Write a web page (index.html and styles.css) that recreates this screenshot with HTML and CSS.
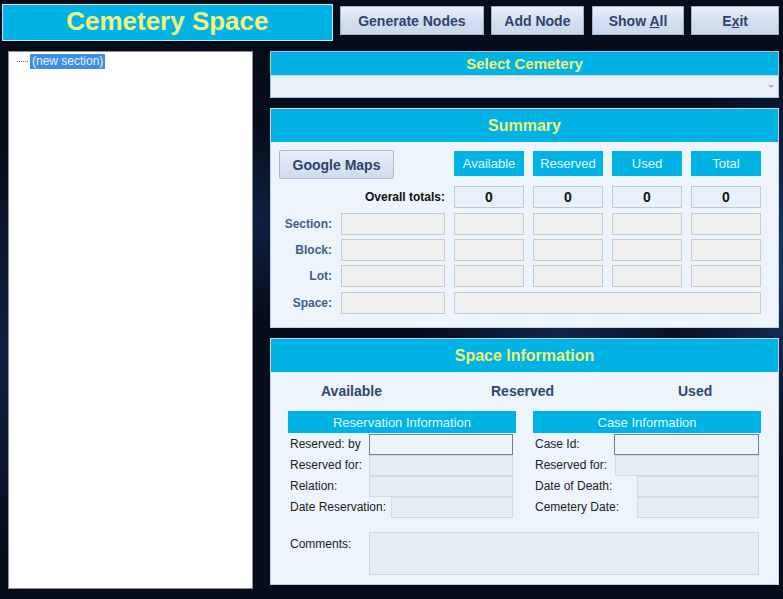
FILE: index.html
```html
<!DOCTYPE html>
<html>
<head>
<meta charset="utf-8">
<link rel="stylesheet" href="styles.css">
</head>
<body>
<div class="app">
  <div class="topbar">
    <div class="title">Cemetery Space</div>
    <div class="btn w-gen">Generate Nodes</div>
    <div class="btn w-add">Add Node</div>
    <div class="btn w-show"><span>Show <u>A</u>ll</span></div>
    <div class="btn w-exit"><span>E<u>x</u>it</span></div>
  </div>
  <div class="main">
    <div class="tree">
      <div class="node"><span class="dots"></span><span class="sel">(new section)</span></div>
    </div>
    <div class="right">
      <div class="panel select">
        <div class="phead small">Select Cemetery</div>
        <div class="dropdown"><span class="arrow"></span></div>
      </div>
      <div class="panel summary">
        <div class="phead">Summary</div>
        <div class="sbody">
          <div class="gmaps">Google Maps</div>
          <div class="pill">Available</div>
          <div class="pill">Reserved</div>
          <div class="pill">Used</div>
          <div class="pill">Total</div>

          <div class="lbl span2 dark tl">Overall totals:</div>
          <div class="tot">0</div>
          <div class="tot">0</div>
          <div class="tot">0</div>
          <div class="tot">0</div>

          <div class="lbl">Section:</div>
          <div class="box"></div><div class="box"></div><div class="box"></div><div class="box"></div><div class="box"></div>
          <div class="lbl">Block:</div>
          <div class="box"></div><div class="box"></div><div class="box"></div><div class="box"></div><div class="box"></div>
          <div class="lbl">Lot:</div>
          <div class="box"></div><div class="box"></div><div class="box"></div><div class="box"></div><div class="box"></div>
          <div class="lbl last">Space:</div>
          <div class="box last"></div><div class="box span4 last"></div>
        </div>
      </div>
      <div class="panel info">
        <div class="phead">Space Information</div>
        <div class="ibody">
          <div class="status">
            <span class="st1">Available</span>
            <span class="st2">Reserved</span>
            <span class="st3">Used</span>
          </div>
          <div class="cols">
            <div class="col">
              <div class="subhead">Reservation Information</div>
              <div class="frow"><span class="flbl l1">Reserved: by</span><span class="fin dark"></span></div>
              <div class="frow"><span class="flbl l1">Reserved for:</span><span class="fin"></span></div>
              <div class="frow"><span class="flbl l1">Relation:</span><span class="fin"></span></div>
              <div class="frow"><span class="flbl l2">Date Reservation:</span><span class="fin"></span></div>
            </div>
            <div class="col">
              <div class="subhead">Case Information</div>
              <div class="frow"><span class="flbl r1">Case Id:</span><span class="fin dark"></span></div>
              <div class="frow"><span class="flbl r2">Reserved for:</span><span class="fin"></span></div>
              <div class="frow"><span class="flbl r3">Date of Death:</span><span class="fin"></span></div>
              <div class="frow"><span class="flbl r3">Cemetery Date:</span><span class="fin"></span></div>
            </div>
          </div>
          <div class="comments">
            <span class="flbl l1 ctop">Comments:</span>
            <span class="cbox"></span>
          </div>
        </div>
      </div>
    </div>
  </div>
</div>
</body>
</html>
```
FILE: styles.css
```css
* { box-sizing: border-box; }
html, body { margin: 0; padding: 0; }
body {
  width: 783px; height: 599px; overflow: hidden;
  font-family: "Liberation Sans", Arial, sans-serif;
  background:
    radial-gradient(ellipse 180px 300px at 790px 260px, rgba(40,90,170,0.55), transparent 70%),
    radial-gradient(ellipse 200px 120px at 560px 330px, rgba(30,70,140,0.45), transparent 70%),
    radial-gradient(ellipse 160px 140px at 265px 220px, rgba(30,70,140,0.35), transparent 70%),
    radial-gradient(ellipse 120px 300px at 0px 350px, rgba(30,70,150,0.35), transparent 70%),
    #070c1a;
}
.app { padding: 4px 4px 0 2px; }
.topbar { display: flex; align-items: flex-start; height: 47px; }
.title {
  width: 332px; height: 37px;
  background: #00b3e4; border: 1px solid #cfe6f2;
  color: #f2f27c; font-weight: bold; font-size: 26px;
  display: flex; align-items: center; justify-content: center;
  padding-bottom: 2px;
}
.btn {
  margin-top: 2px; height: 29px;
  background: linear-gradient(#eaf0f9, #d3def0 55%, #cbd8ec);
  border: 1px solid #9fb2cc;
  color: #2e4470; font-weight: bold; font-size: 14px;
  display: flex; align-items: center; justify-content: center;
}
.w-gen { margin-left: 7px; width: 145px; }
.w-add { margin-left: 7px; width: 93px; }
.w-show { margin-left: 8px; width: 93px; }
.w-exit { margin-left: 7px; width: 88px; }

.main { display: flex; align-items: flex-start; }
.tree {
  margin-left: 6px; width: 245px; height: 538px;
  background: #fff; border: 1px solid #8a9098;
  padding: 1px 0 0 8px;
}
.node { display: flex; align-items: center; height: 16px; font-size: 12px; }
.dots { width: 11px; border-top: 1px dotted #707070; margin-right: 2px; }
.sel { background: #3d8ee8; color: #eaf2ff; padding: 0 2px; line-height: 15px; }

.right { margin-left: 17px; width: 509px; display: flex; flex-direction: column; }
.panel { border: 1px solid #b8d6e6; background: #eef4fb; }
.phead {
  background: #00b3e4; color: #eef27a; font-weight: bold; font-size: 16px;
  height: 33px; display: flex; align-items: center; justify-content: center;
}
.phead.small { height: 23px; font-size: 15px; }
.select { border-color: #9cc4dc; }
.dropdown { height: 22px; background: #eaf0f9; border-top: 1px solid #c4d4e4; position: relative; }
.arrow {
  position: absolute; right: 4px; top: 9px;
  border-left: 3px solid transparent; border-right: 3px solid transparent;
  border-top: 3px solid #a8b0b8;
}

.summary { margin-top: 10px; height: 220px; }
.sbody {
  display: grid;
  grid-template-columns: 53px 104px 70px 70px 70px 70px;
  grid-template-rows: 28px 27px 22px 22px 22px 23px;
  column-gap: 9px;
  row-gap: 4px;
  padding: 8px 0 0 8px;
}
.gmaps {
  grid-column: 1 / span 2; width: 115px; height: 29px;
  border: 1px solid #a8bcd6; border-radius: 2px;
  background: linear-gradient(#e6eef9, #cfdcee);
  color: #2e4470; font-weight: bold; font-size: 14px;
  display: flex; align-items: center; justify-content: center;
}
.pill {
  margin-top: 1px; height: 25px; background: #00b3e4; color: #e4f6ff; font-size: 13px;
  display: flex; align-items: center; justify-content: center;
}
.sbody > .tl, .sbody > .tot { margin-top: 4px; height: 22px; }
.lbl {
  color: #3d5f84; font-weight: bold; font-size: 12px;
  display: flex; align-items: center; justify-content: flex-end;
}
.lbl.dark { color: #111; }
.span2 { grid-column: 1 / span 2; }
.span4 { grid-column: 3 / span 4; }
.tot {
  background: #e8f1fb; border: 1px solid #c2cad4;
  font-weight: bold; font-size: 14px; color: #111;
  display: flex; align-items: center; justify-content: center;
}
.box { background: #efefef; border: 1px solid #c8ccd0; }
.sbody > .last { margin-top: 1px; }

.info { margin-top: 10px; height: 247px; }
.ibody { padding: 0 0 0 17px; }
.status { position: relative; height: 39px; color: #2e4870; font-weight: bold; font-size: 14px; }
.status span { position: absolute; top: 11px; }
.st1 { left: 33px; }
.st2 { left: 203px; }
.st3 { left: 390px; }
.cols { display: flex; gap: 17px; }
.col { width: 228px; }
.subhead {
  height: 22px; background: #00b3e4; color: #e4f6ff; font-size: 13px;
  display: flex; align-items: center; justify-content: center; margin-bottom: 1px;
}
.frow { display: flex; height: 21px; align-items: stretch; }
.flbl { font-size: 12px; color: #222; padding: 3px 0 0 2px; flex-shrink: 0; }
.fin { width: 144px; background: #e6edf6; border: 1px solid #d2dae4; }
.fin.dark { background: #edf3fb; border: 1px solid #7a7e84; }
.l1 { width: 81px; }
.l2 { width: 103px; }
.l2 + .fin { width: 122px; }
.r1 { width: 81px; }
.r1 + .fin { width: 145px; }
.r2 { width: 82px; }
.r2 + .fin { width: 144px; }
.r3 { width: 104px; }
.r3 + .fin { width: 122px; }
.comments { display: flex; margin-top: 14px; }
.ctop { padding-top: 5px; }
.cbox { width: 390px; height: 43px; background: #e6edf6; border: 1px solid #cfd8e2; }
```
